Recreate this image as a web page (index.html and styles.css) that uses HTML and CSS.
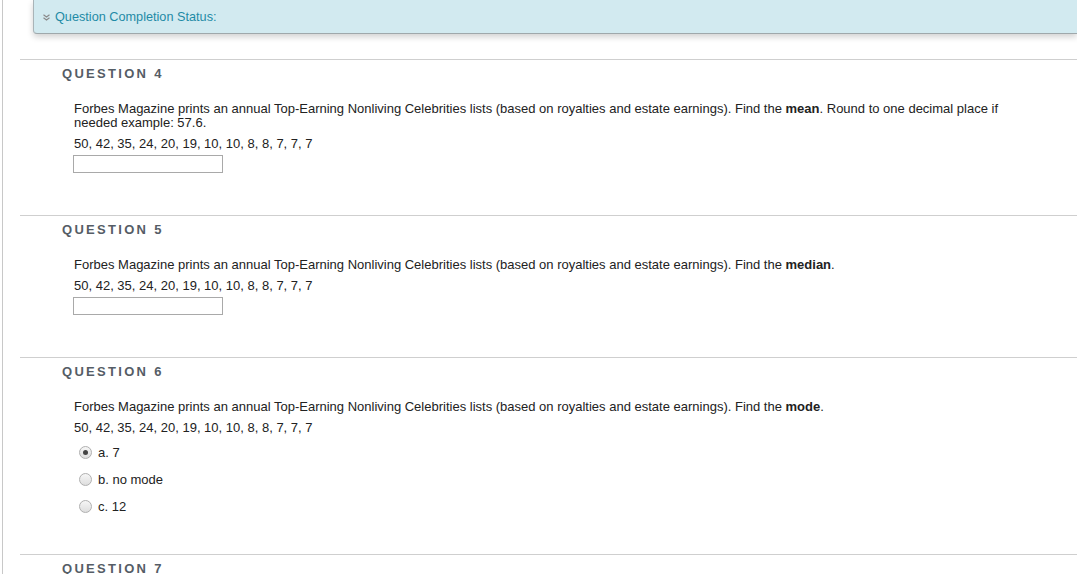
FILE: index.html
```html
<!DOCTYPE html>
<html lang="en">
<head>
  <meta charset="UTF-8" />
  <title>Take Test</title>
  <link rel="stylesheet" href="styles.css">
</head>
<body>
  <div class="frame">

    <div class="status-bar">
      <svg class="chevron" width="7" height="7" viewBox="0 0 7 7">
        <path d="M0.5 0.8 L3.5 3 L6.5 0.8 M0.5 3.8 L3.5 6 L6.5 3.8" fill="none" stroke="#8a8a8a" stroke-width="1.2"/>
      </svg>
      <a href="#">Question Completion Status:</a>
    </div>

    <div class="questions">
      <div class="question">
        <h3>QUESTION 4</h3>
        <div class="body">
          <p>Forbes Magazine prints an annual Top-Earning Nonliving Celebrities lists (based on royalties and estate earnings). Find the <b>mean</b>. Round to one decimal place if needed example: 57.6.</p>
          <p class="data">50, 42, 35, 24, 20, 19, 10, 10, 8, 8, 7, 7, 7</p>
          <input type="text" class="answer">
        </div>
      </div>

      <div class="question">
        <h3>QUESTION 5</h3>
        <div class="body">
          <p>Forbes Magazine prints an annual Top-Earning Nonliving Celebrities lists (based on royalties and estate earnings). Find the <b>median</b>.</p>
          <p class="data">50, 42, 35, 24, 20, 19, 10, 10, 8, 8, 7, 7, 7</p>
          <input type="text" class="answer">
        </div>
      </div>

      <div class="question multiple">
        <h3>QUESTION 6</h3>
        <div class="body">
          <p>Forbes Magazine prints an annual Top-Earning Nonliving Celebrities lists (based on royalties and estate earnings). Find the <b>mode</b>.</p>
          <p class="data">50, 42, 35, 24, 20, 19, 10, 10, 8, 8, 7, 7, 7</p>
        </div>
        <ul class="options">
          <li><span class="radio checked"></span>a. 7</li>
          <li><span class="radio"></span>b. no mode</li>
          <li><span class="radio"></span>c. 12</li>
        </ul>
      </div>

      <div class="question">
        <h3>QUESTION 7</h3>
      </div>
    </div>

  </div>
</body>
</html>
```

FILE: styles.css
```css
body {
  margin: 0;
  font-family: "Liberation Sans", Arial, sans-serif;
  font-size: 13px;
  color: #222;
  background: #fff;
  overflow: hidden;
}

.frame {
  margin-left: 2px;
  border-left: 1px solid #c8c8c8;
  min-height: 574px;
}

.status-bar {
  margin-left: 30px;
  height: 33px;
  display: flex;
  align-items: center;
  background: #d2eaf0;
  border-left: 1px solid #a9b4b8;
  border-bottom: 1px solid #9fa8ab;
  border-bottom-left-radius: 4px;
  box-shadow: 0 3px 6px rgba(0, 0, 0, 0.18);
  padding-left: 9px;
}

.chevron {
  margin-right: 5px;
  margin-top: 1px;
}

.status-bar a {
  color: #1f8aa6;
  text-decoration: none;
  font-size: 12.7px;
}

.questions {
  margin: 25px 0 0 17px;
}

.question {
  border-top: 1px solid #cfcfcf;
  padding-bottom: 42px;
}

.question.multiple {
  padding-bottom: 34px;
}

.question h3 {
  margin: 0;
  padding: 6px 0 0 42px;
  font-size: 13px;
  line-height: 16px;
  letter-spacing: 2.3px;
  font-weight: bold;
  color: #555d66;
}

.body {
  padding: 20px 0 0 54px;
  max-width: 945px;
}

.body p {
  margin: 0;
  line-height: 14px;
}

.body p.data {
  margin-top: 7px;
}

.answer {
  display: block;
  margin: 4px 0 0 -1px;
  width: 150px;
  height: 18px;
  box-sizing: border-box;
  border: 1px solid #a9a9a9;
  padding: 0;
}

.options {
  list-style: none;
  margin: 4px 0 0;
  padding: 0 0 0 59px;
}

.options li {
  height: 27px;
  display: flex;
  align-items: center;
}

.radio {
  width: 13px;
  height: 13px;
  box-sizing: border-box;
  border-radius: 50%;
  border: 1px solid #b0b0b0;
  background: linear-gradient(#f6f6f6, #dedede);
  margin-right: 6px;
  position: relative;
}

.radio.checked::after {
  content: "";
  position: absolute;
  left: 3px;
  top: 3px;
  width: 5px;
  height: 5px;
  border-radius: 50%;
  background: #444;
}
```
